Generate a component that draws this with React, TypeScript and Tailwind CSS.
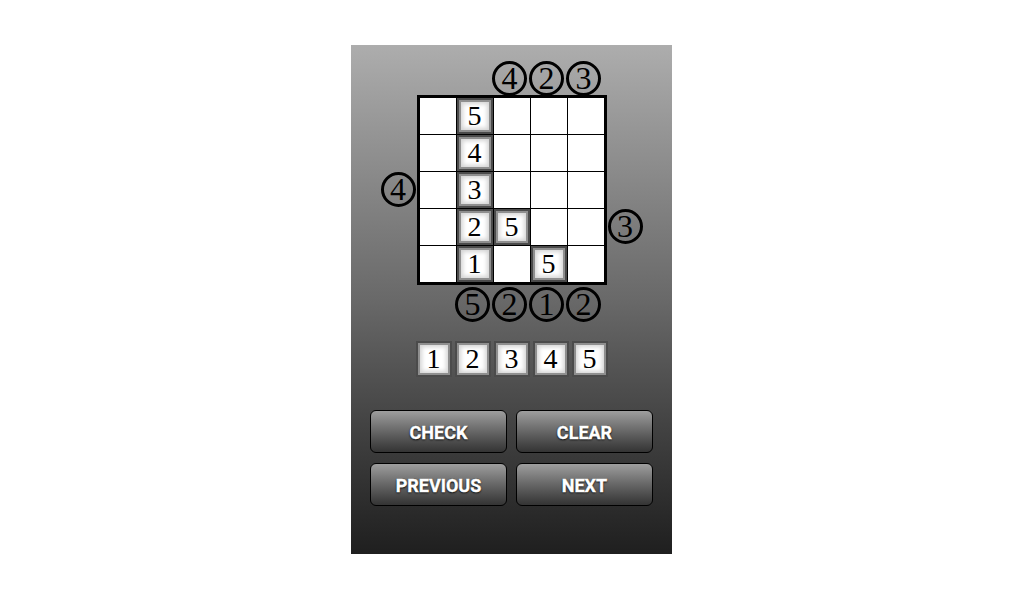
import React from "react";

const serif = { fontFamily: '"Liberation Serif", "DejaVu Serif", serif' };

function Circle({ n }: { n: number | null }) {
  if (n === null) return <div className="w-[37px] h-[35px]" />;
  return (
    <div className="w-[37px] h-[35px] flex items-center justify-center">
      <div
        className="w-[35px] h-[35px] shrink-0 rounded-full border-[3px] border-black flex items-center justify-center text-[32px] leading-none text-black pb-[1px]"
        style={serif}
      >
        {n}
      </div>
    </div>
  );
}

function SideCircle({ n }: { n: number | null }) {
  if (n === null) return <div className="h-[37px] w-[35px]" />;
  return (
    <div className="h-[37px] w-[35px] flex items-center justify-center">
      <div
        className="w-[35px] h-[35px] shrink-0 rounded-full border-[3px] border-black flex items-center justify-center text-[32px] leading-none text-black pb-[1px]"
        style={serif}
      >
        {n}
      </div>
    </div>
  );
}

function Tile({ n }: { n: number }) {
  return (
    <div
      className="w-[36px] h-[36px] border-[2px] border-[#4b4b4b] bg-white flex items-center justify-center text-[28px] leading-none text-black shadow-[inset_0_0_0_2px_#8f8f8f,inset_0_0_4px_4px_#d4d4d4]"
      style={serif}
    >
      {n}
    </div>
  );
}

const board: (number | null)[][] = [
  [null, 5, null, null, null],
  [null, 4, null, null, null],
  [null, 3, null, null, null],
  [null, 2, 5, null, null],
  [null, 1, null, 5, null],
];

const top: (number | null)[] = [null, null, 4, 2, 3];
const bottom: (number | null)[] = [null, 5, 2, 1, 2];
const left: (number | null)[] = [null, null, 4, null, null];
const right: (number | null)[] = [null, null, null, 3, null];

function Btn({ label }: { label: string }) {
  return (
    <button
      className="h-[43px] rounded-[6px] border border-black bg-linear-to-b from-[#9e9e9e] to-[#343434] text-white font-bold text-[18px] pt-[2px] [-webkit-text-stroke:0.4px_white] [text-shadow:0_1px_2px_#000,0_0_1px_#000]"
      style={{ fontFamily: 'Roboto, "Liberation Sans", sans-serif' }}
    >
      {label}
    </button>
  );
}

export default function App() {
  return (
    <div className="w-[1024px] h-[600px] bg-white flex items-start pl-[351px] pt-[45px]">
      <div className="w-[321px] h-[509px] bg-linear-to-b from-[#adadad] via-[#696969] to-[#1f1f1f] flex flex-col items-center pt-[15px]">
        <div className="grid grid-cols-[35px_190px_35px] grid-rows-[35px_190px_35px]">
          <div />
          <div className="flex pl-[1.5px] -ml-[1px] pt-[1px]">
            {top.map((n, i) => (
              <Circle key={i} n={n} />
            ))}
          </div>
          <div />
          <div className="flex flex-col pt-[1.5px] -ml-[1px]">
            {left.map((n, i) => (
              <SideCircle key={i} n={n} />
            ))}
          </div>
          <div className="w-[190px] h-[190px] border-[3px] border-black bg-black grid grid-cols-[36px_36px_36px_36px_36px] grid-rows-[36px_36px_36px_36px_36px] gap-[1px]">
            {board.flatMap((row, r) =>
              row.map((c, ci) => (
                <div key={`${r}-${ci}`} className="bg-white">
                  {c !== null && <Tile n={c} />}
                </div>
              ))
            )}
          </div>
          <div className="flex flex-col pt-[1.5px] ml-[1px]">
            {right.map((n, i) => (
              <SideCircle key={i} n={n} />
            ))}
          </div>
          <div />
          <div className="flex pl-[1.5px] -ml-[1px] pt-[2px]">
            {bottom.map((n, i) => (
              <Circle key={i} n={n} />
            ))}
          </div>
          <div />
        </div>

        <div className="flex gap-[3px] mt-[21px]">
          {[1, 2, 3, 4, 5].map((n) => (
            <Tile key={n} n={n} />
          ))}
        </div>

        <div className="grid grid-cols-[137px_137px] gap-x-[9px] gap-y-[10px] mt-[33px]">
          <Btn label="CHECK" />
          <Btn label="CLEAR" />
          <Btn label="PREVIOUS" />
          <Btn label="NEXT" />
        </div>
      </div>
    </div>
  );
}
